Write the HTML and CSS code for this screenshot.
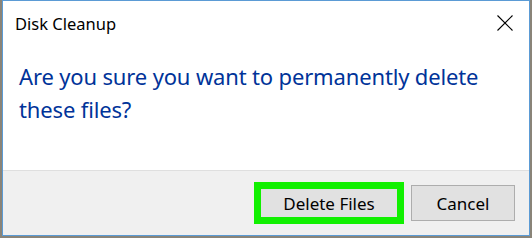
FILE: index.html
```html
<!DOCTYPE html>
<html>
<head>
    <title>Disk Cleanup</title>
    <link rel="stylesheet" href="styles.css">
</head>
<body>

<div class="window">
    <div class="titlebar">
        <span class="title">Disk Cleanup</span>
        <button class="close" title="Close">
            <svg width="16" height="16" viewBox="0 0 16 16">
                <path d="M0.5 0.5 L15.5 15.5 M15.5 0.5 L0.5 15.5" stroke="#000" stroke-width="1.1" fill="none"/>
            </svg>
        </button>
    </div>
    <div class="content">
        <p class="question">Are you sure you want to permanently delete these files?</p>
    </div>
    <div class="footer">
        <button class="btn highlight">Delete Files</button>
        <button class="btn">Cancel</button>
    </div>
</div>

</body>
</html>
```

FILE: styles.css
```css
body {
    margin: 0;
    background-color: #8a8478;
    font-family: "Noto Sans", "Open Sans", sans-serif;
}
.window {
    margin: 0 2px;
    height: 236px;
    box-sizing: border-box;
    border: 1px solid #5b9bd5;
    background-color: #fff;
    display: flex;
    flex-direction: column;
}
.titlebar {
    height: 44px;
    display: flex;
    align-items: center;
    justify-content: space-between;
    padding-left: 12px;
}
.title {
    font-size: 16.5px;
    color: #000;
}
.close {
    width: 46px;
    height: 44px;
    border: none;
    background: none;
    padding: 0;
    margin-right: 1px;
    display: flex;
    align-items: center;
    justify-content: center;
}
.content {
    flex: 1;
    padding: 15px 16px 0;
}
.question {
    margin: 0;
    font-size: 22px;
    line-height: 33px;
    letter-spacing: -0.15px;
    color: #003399;
}
.footer {
    height: 64px;
    border-top: 1px solid #dfdfdf;
    background-color: #f0f0f0;
    display: flex;
    justify-content: flex-end;
    align-items: center;
    gap: 10px;
    padding-right: 14px;
}
.btn {
    height: 36px;
    min-width: 104px;
    padding: 0 14px;
    font-family: inherit;
    font-size: 17px;
    color: #000;
    background-color: #e1e1e1;
    border: 1px solid #adadad;
}
.btn.highlight {
    width: 144px;
    outline: 7px solid #11f000;
    outline-offset: -4px;
}
```
